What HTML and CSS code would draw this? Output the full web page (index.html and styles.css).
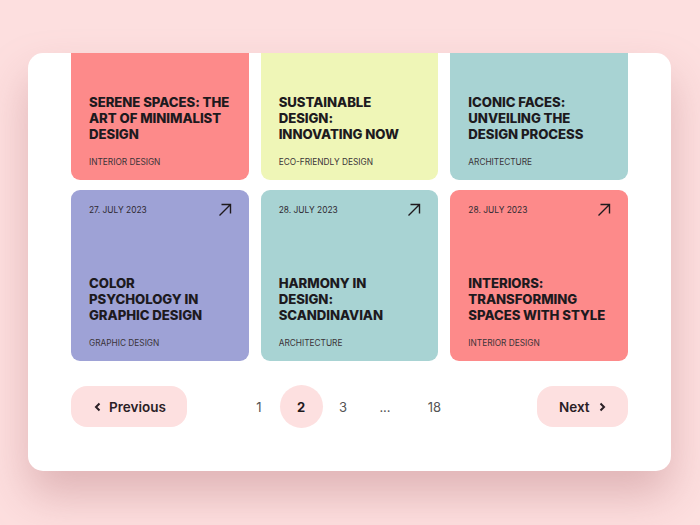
FILE: index.html
```html
<!DOCTYPE html>
<html lang="en">
<head>
<meta charset="utf-8">
<title>Blog posts</title>
<link rel="stylesheet" href="styles.css">
</head>
<body>
<main class="panel">
  <div class="grid">
    <article class="post red">
      <h2 class="title">SERENE SPACES: THE<br>ART OF MINIMALIST<br>DESIGN</h2>
      <p class="cat">INTERIOR DESIGN</p>
    </article>
    <article class="post yellow">
      <h2 class="title">SUSTAINABLE<br>DESIGN:<br>INNOVATING NOW</h2>
      <p class="cat">ECO-FRIENDLY DESIGN</p>
    </article>
    <article class="post teal">
      <h2 class="title">ICONIC FACES:<br>UNVEILING THE<br>DESIGN PROCESS</h2>
      <p class="cat">ARCHITECTURE</p>
    </article>
    <article class="post purple">
      <div class="top"><span class="date">27. JULY 2023</span>
        <svg class="arrow" viewBox="0 0 14 14"><path d="M1.5 12.5 L12.5 1.5 M3.5 1.5 H12.5 V10.5"/></svg></div>
      <h2 class="title">COLOR<br>PSYCHOLOGY IN<br>GRAPHIC DESIGN</h2>
      <p class="cat">GRAPHIC DESIGN</p>
    </article>
    <article class="post teal">
      <div class="top"><span class="date">28. JULY 2023</span>
        <svg class="arrow" viewBox="0 0 14 14"><path d="M1.5 12.5 L12.5 1.5 M3.5 1.5 H12.5 V10.5"/></svg></div>
      <h2 class="title">HARMONY IN<br>DESIGN:<br>SCANDINAVIAN</h2>
      <p class="cat">ARCHITECTURE</p>
    </article>
    <article class="post red">
      <div class="top"><span class="date">28. JULY 2023</span>
        <svg class="arrow" viewBox="0 0 14 14"><path d="M1.5 12.5 L12.5 1.5 M3.5 1.5 H12.5 V10.5"/></svg></div>
      <h2 class="title">INTERIORS:<br>TRANSFORMING<br>SPACES WITH STYLE</h2>
      <p class="cat">INTERIOR DESIGN</p>
    </article>
  </div>
  <nav class="pager">
    <button class="btn prev"><svg class="chev" viewBox="0 0 8 10"><path d="M5.5 1.5 L2 5 L5.5 8.5"/></svg>Previous</button>
    <div class="pages">
      <span class="pg">1</span>
      <span class="pg current">2</span>
      <span class="pg">3</span>
      <span class="pg">...</span>
      <span class="pg">18</span>
    </div>
    <button class="btn next">Next<svg class="chev" viewBox="0 0 8 10"><path d="M2.5 1.5 L6 5 L2.5 8.5"/></svg></button>
  </nav>
</main>
</body>
</html>
```
FILE: styles.css
```css
* { box-sizing: border-box; }
html, body { margin: 0; height: 100%; }
body {
  background: #fddfdf;
  font-family: Inter, "Noto Sans", sans-serif;
  color: #1f1a1d;
  padding: 53px 29px 0 28px;
}
.panel {
  background: #fff;
  border-radius: 15px;
  height: 418px;
  overflow: hidden;
  padding: 0 43px;
  box-shadow: 0 24px 44px rgba(180, 115, 120, 0.4);
}
.grid {
  margin-top: -44px;
  display: grid;
  grid-template-columns: repeat(3, 1fr);
  grid-auto-rows: 171px;
  column-gap: 12px;
  row-gap: 10px;
}
.post {
  border-radius: 9px;
  padding: 13px 17px 12px 18px;
  display: flex;
  flex-direction: column;
  justify-content: flex-end;
}
.red { background: #fd8a8a; }
.yellow { background: #eff6b7; }
.teal { background: #a8d3d3; }
.purple { background: #9ea2d6; }
.top {
  display: flex;
  justify-content: space-between;
  align-items: flex-start;
  margin-bottom: auto;
}
.date {
  font-size: 8.4px;
  line-height: 12px;
  font-weight: 400;
  color: #2f2a32;
  margin-top: 1px;
}
.arrow {
  width: 14px;
  height: 14px;
  fill: none;
  stroke: #1f1a1d;
  stroke-width: 1.4;
}
.title {
  margin: 0;
  font-size: 13.2px;
  line-height: 16px;
  font-weight: 800;
  letter-spacing: -0.05px;
  color: #1d1a1e;
}
.cat {
  margin: 14px 0 0;
  font-size: 8.3px;
  line-height: 12px;
  color: #3a3438;
}
.pager {
  margin-top: 24px;
  display: flex;
  align-items: center;
  justify-content: space-between;
}
.btn {
  border: 0;
  background: #fde0e0;
  border-radius: 16px;
  height: 41px;
  font-family: inherit;
  font-size: 13.5px;
  font-weight: 600;
  color: #2a2026;
  display: flex;
  align-items: center;
  gap: 7px;
}
.prev { width: 116px; padding: 0 0 0 23px; }
.next { width: 91px; padding: 0 0 0 22px; gap: 8px; }
.chev {
  width: 8px;
  height: 10px;
  fill: none;
  stroke: #2a2026;
  stroke-width: 2;
}
.pages {
  display: flex;
  align-items: center;
  margin-right: 22px;
}
.pg {
  width: 43px;
  height: 43px;
  border-radius: 50%;
  display: flex;
  align-items: center;
  justify-content: center;
  font-size: 13px;
  color: #555;
  margin-left: -1px;
}
.current {
  background: #fde0e0;
  color: #1f1a1d;
  font-weight: 700;
}
.pg:last-child { width: 58px; }
```
